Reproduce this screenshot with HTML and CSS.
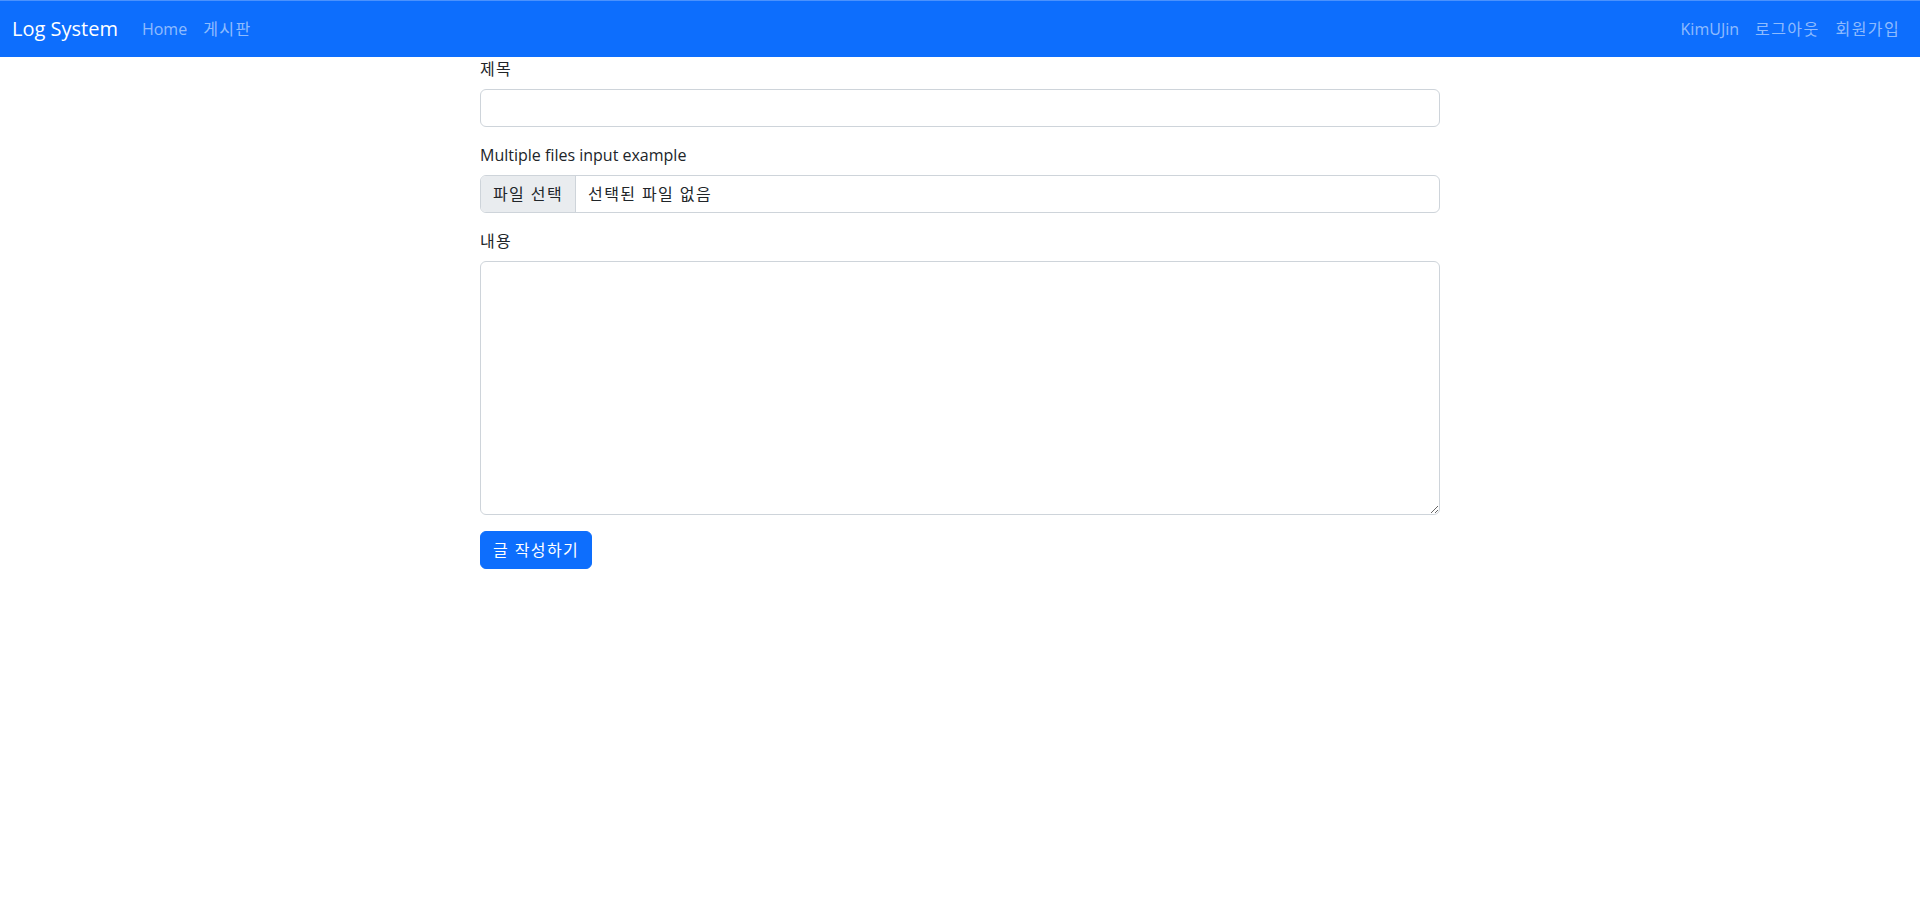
FILE: index.html
```html
<!DOCTYPE html>
<html lang="ko">
<head>
<meta charset="utf-8">
<title>Log System</title>
<link rel="stylesheet" href="styles.css">
</head>
<body>
<nav class="navbar">
  <div class="nav-inner">
    <a class="brand" href="#">Log System</a>
    <ul class="nav-list">
      <li><a class="nav-link" href="#">Home</a></li>
      <li><a class="nav-link ko" href="#">게시판</a></li>
    </ul>
    <ul class="nav-list nav-right">
      <li><a class="nav-link" href="#">KimUJin</a></li>
      <li><a class="nav-link ko" href="#">로그아웃</a></li>
      <li><a class="nav-link ko" href="#">회원가입</a></li>
    </ul>
  </div>
</nav>
<main class="container">
  <form class="write-form">
    <div class="field">
      <label class="form-label ko" for="title">제목</label>
      <input class="form-control" id="title" type="text">
    </div>
    <div class="field">
      <label class="form-label" for="files">Multiple files input example</label>
      <div class="file-control" id="files">
        <span class="file-btn ko">파일 선택</span>
        <span class="file-text ko">선택된 파일 없음</span>
      </div>
    </div>
    <div class="field">
      <label class="form-label ko" for="content">내용</label>
      <textarea class="form-control textarea" id="content"></textarea>
    </div>
    <button type="button" class="btn-primary ko">글 작성하기</button>
  </form>
</main>
</body>
</html>
```
FILE: styles.css
```css
* { box-sizing: border-box; }
body {
  margin: 0;
  font-family: "Open Sans", "Noto Sans CJK KR", sans-serif;
  font-size: 16px;
  line-height: 1.5;
  color: #212529;
  background: #fff;
}
.ko { letter-spacing: 1.4px; }
.navbar {
  background: #0d6efd;
  border-top: 1px solid #4b92fd;
  padding: 8px 0;
}
.nav-inner {
  display: flex;
  align-items: center;
  padding: 0 12px;
}
.brand {
  color: #fff;
  text-decoration: none;
  font-size: 20px;
  line-height: 30px;
  padding: 5px 0;
  margin-right: 16px;
  font-weight: 500;
}
.nav-list {
  display: flex;
  list-style: none;
  margin: 0;
  padding: 0;
}
.nav-right { margin-left: auto; }
.nav-link {
  display: block;
  padding: 8px;
  line-height: 24px;
  color: rgba(255, 255, 255, 0.55);
  text-decoration: none;
  font-size: 16px;
}
.container {
  width: 960px;
  margin: 0 auto;
}
.field { margin-bottom: 16px; }
.form-label {
  display: block;
  margin-bottom: 8px;
  font-size: 16px;
  line-height: 24px;
}
.form-control {
  display: block;
  width: 100%;
  height: 38px;
  padding: 6px 12px;
  font: inherit;
  color: #212529;
  border: 1px solid #ced4da;
  border-radius: 6px;
  background: #fff;
  outline: none;
}
.textarea {
  height: 254px;
  resize: vertical;
}
.file-control {
  display: flex;
  height: 38px;
  border: 1px solid #ced4da;
  border-radius: 6px;
  overflow: hidden;
  font-size: 16px;
  line-height: 24px;
}
.file-btn {
  background: #e9ecef;
  border-right: 1px solid #ced4da;
  padding: 6px 12px;
}
.file-text {
  padding: 6px 12px;
}
.btn-primary {
  display: inline-block;
  height: 38px;
  padding: 6px 12px;
  background: #0d6efd;
  border: 1px solid #0d6efd;
  border-radius: 6px;
  color: #fff;
  font-family: inherit;
  font-size: 16px;
  line-height: 24px;
  cursor: pointer;
}
```
